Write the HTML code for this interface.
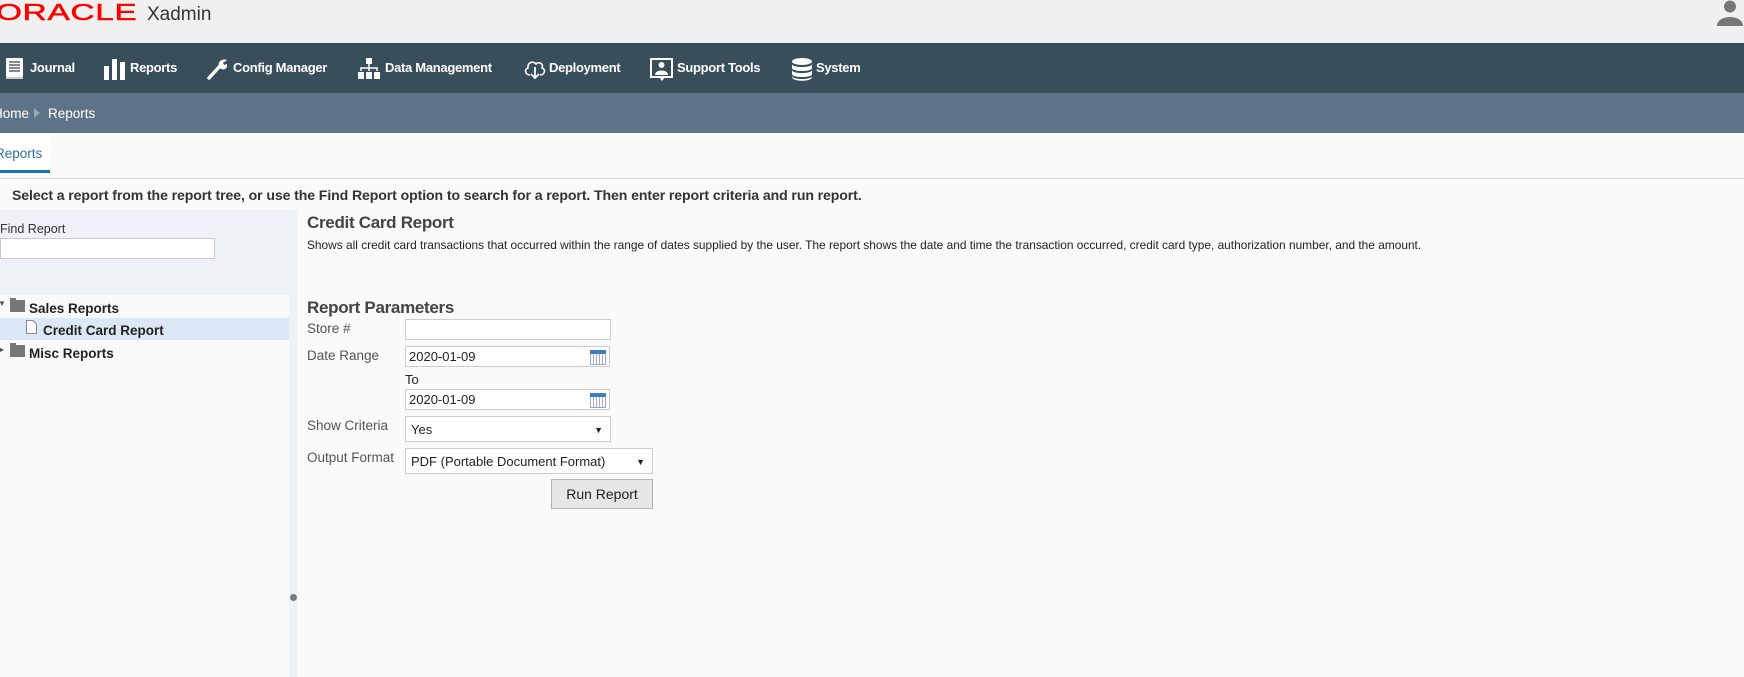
<!DOCTYPE html>
<html><head><meta charset="utf-8"><style>
*{margin:0;padding:0;box-sizing:border-box}
body{width:1744px;height:677px;overflow:hidden;background:#fafafa;font-family:"Liberation Sans",Arial,sans-serif;position:relative;color:#333}
.abs{position:absolute}
#top{left:0;top:0;width:1744px;height:43px;background:#f0f0f0}
#nav{left:0;top:43px;width:1744px;height:50px;background:#384e5b}
#bc{left:0;top:93px;width:1744px;height:40px;background:#5d7387}
.ni{position:absolute;top:0;height:50px;line-height:50px;color:#fff;font-weight:bold;font-size:13px;letter-spacing:-0.3px}
.ni svg{position:absolute;top:15px}
.lbl{position:absolute;font-size:13.5px;color:#555}
.inp{position:absolute;background:#fff;border:1px solid #ccc;font-size:13px;color:#222;padding-left:3px;line-height:20px}
.cal{position:absolute;right:3px;top:3px;width:16px;height:15px;border:1px solid #9ab;background:repeating-linear-gradient(90deg,#fff 0 2px,#aab 2px 3px)}
.cal:before{content:"";position:absolute;left:-1px;right:-1px;top:-1px;height:4px;background:#3a7fc1}
.sel{position:absolute;background:#fff;border:1px solid #ccc;font-size:13px;color:#222;padding-left:5px}
.sel:after{content:"▼";position:absolute;right:7px;font-size:9px;top:0}
</style></head><body>
<div id="top" class="abs">
 <div class="abs" style="left:-4px;top:-1px;font-size:23px;color:#f00;letter-spacing:0.5px;transform:scaleX(1.45);transform-origin:left;-webkit-text-stroke:0.5px #f00">ORACLE</div>
 <div class="abs" style="left:147px;top:4px;font-size:19px;color:#333">Xadmin</div>
 <svg class="abs" style="left:1716px;top:0px" width="28" height="27" viewBox="0 0 28 27"><circle cx="14" cy="6.5" r="6" fill="#777"/><path d="M1 26 C1 14 27 14 27 26Z" fill="#777"/></svg>
</div>
<div id="nav" class="abs">
 <div class="ni" style="left:6px"><svg width="18" height="21" viewBox="0 0 18 21"><rect x="0" y="0" width="17" height="19" rx="1" fill="#fff"/><rect x="0" y="19" width="17" height="2" fill="#ccc"/><g stroke="#384e5b" stroke-width="1.3"><line x1="3" y1="4" x2="14" y2="4"/><line x1="3" y1="7" x2="14" y2="7"/><line x1="3" y1="10" x2="14" y2="10"/><line x1="3" y1="13" x2="14" y2="13"/></g></svg><span style="position:absolute;left:24px;white-space:nowrap">Journal</span></div>
 <div class="ni" style="left:104px"><svg width="22" height="22" viewBox="0 0 22 22"><rect x="0" y="8" width="5" height="14" fill="#fff"/><rect x="8" y="1" width="5" height="21" fill="#fff"/><rect x="16" y="4" width="5" height="18" fill="#fff"/></svg><span style="position:absolute;left:26px;white-space:nowrap">Reports</span></div>
 <div class="ni" style="left:207px"><svg width="22" height="22" viewBox="0 0 22 22"><path d="M2 20 L13 8" stroke="#fff" stroke-width="3.5" stroke-linecap="round"/><path d="M12 9 C10 4 15 0 20 2 L16 5 L17 7 L20 6 C21 11 16 13 13 10Z" fill="#fff"/></svg><span style="position:absolute;left:26px;white-space:nowrap">Config Manager</span></div>
 <div class="ni" style="left:358px"><svg width="22" height="22" viewBox="0 0 22 22"><rect x="8" y="0" width="6" height="6" fill="#fff"/><path d="M11 6V10M3 13V10H19V13M11 10V13" stroke="#fff" stroke-width="1.5" fill="none"/><rect x="0" y="14" width="6" height="7" fill="#fff"/><rect x="8" y="14" width="6" height="7" fill="#fff"/><rect x="16" y="14" width="6" height="7" fill="#fff"/></svg><span style="position:absolute;left:27px;white-space:nowrap">Data Management</span></div>
 <div class="ni" style="left:524px"><svg width="22" height="22" viewBox="0 0 22 22"><path d="M6 17 C1 17 0 11 4 10 C3 5 9 2 12 6 C15 3 20 6 18 10 C22 11 21 17 16 17" stroke="#fff" stroke-width="1.6" fill="none"/><path d="M11 9V20M7 16L11 20L15 16" stroke="#fff" stroke-width="1.8" fill="none"/></svg><span style="position:absolute;left:25px;white-space:nowrap">Deployment</span></div>
 <div class="ni" style="left:650px"><svg width="24" height="24" viewBox="0 0 24 24"><rect x="1" y="1" width="21" height="18" fill="none" stroke="#fff" stroke-width="2"/><path d="M9 19L12 23L15 19" fill="#fff"/><circle cx="11.5" cy="7" r="3" fill="#fff"/><path d="M5 17C5 11 18 11 18 17Z" fill="#fff"/></svg><span style="position:absolute;left:27px;white-space:nowrap">Support Tools</span></div>
 <div class="ni" style="left:792px"><svg width="20" height="23" viewBox="0 0 20 23"><ellipse cx="10" cy="3.5" rx="10" ry="3.5" fill="#fff"/><path d="M0 6C0 10 20 10 20 6V10C20 14 0 14 0 10Z" fill="#fff"/><path d="M0 12C0 16 20 16 20 12V16C20 20 0 20 0 16Z" fill="#fff"/><path d="M0 18C0 22 20 22 20 18V19C20 24 0 24 0 19Z" fill="#fff"/></svg><span style="position:absolute;left:24px;white-space:nowrap">System</span></div>
</div>
<div id="bc" class="abs">
 <div class="abs" style="left:-7px;top:13px;font-size:13.5px;color:#fff">Home</div>
 <div class="abs" style="left:34px;top:15px;width:0;height:0;border-left:6px solid #9aa8b5;border-top:5px solid transparent;border-bottom:5px solid transparent"></div>
 <div class="abs" style="left:48px;top:13px;font-size:13.5px;color:#fff">Reports</div>
</div>
<div class="abs" style="left:0;top:133px;width:50px;height:40px;background:#fff"></div>
<div class="abs" style="left:-5px;top:146px;font-size:13.5px;color:#2f6fa6">Reports</div>
<div class="abs" style="left:0;top:170px;width:50px;height:3px;background:#1a74b8"></div>
<div class="abs" style="left:0;top:178px;width:1744px;height:1px;background:#d8d8d8"></div>
<div class="abs" style="left:12px;top:187px;font-size:14.1px;font-weight:bold;color:#333;white-space:nowrap;letter-spacing:-0.1px">Select a report from the report tree, or use the Find Report option to search for a report. Then enter report criteria and run report.</div>
<div class="abs" style="left:0;top:210px;width:297px;height:467px;background:#eef1f5"></div>
<div class="abs" style="left:0;top:295px;width:289px;height:382px;background:#fafafa"></div>
<div class="abs" style="left:0;top:318px;width:289px;height:22px;background:#dce8f5"></div>
<div class="abs" style="left:290px;top:594px;width:7px;height:7px;border-radius:50%;background:#777"></div>
<div class="abs" style="left:0;top:222px;font-size:12.5px;color:#333">Find Report</div>
<div class="abs" style="left:0;top:238px;width:215px;height:21px;background:#fff;border:1px solid #ccc"></div>
<div class="abs" style="left:-2px;top:299px;font-size:8px;color:#555">▼</div>
<div class="abs" style="left:-2px;top:345px;font-size:8px;color:#555">▶</div>
<svg class="abs" style="left:10px;top:298px" width="15" height="14"><rect x="0" y="0" width="6" height="3" fill="#777"/><rect x="0" y="2" width="15" height="12" fill="#777"/></svg>
<svg class="abs" style="left:10px;top:343px" width="15" height="14"><rect x="0" y="0" width="6" height="3" fill="#777"/><rect x="0" y="2" width="15" height="12" fill="#777"/></svg>
<svg class="abs" style="left:26px;top:320px" width="11" height="14"><path d="M0.5 0.5H7L10.5 4V13.5H0.5Z" fill="#fff" stroke="#888"/></svg>
<div class="abs" style="left:29px;top:301px;font-size:13.5px;font-weight:bold;color:#222">Sales Reports</div>
<div class="abs" style="left:43px;top:323px;font-size:13.5px;font-weight:bold;color:#222">Credit Card Report</div>
<div class="abs" style="left:29px;top:346px;font-size:13.5px;font-weight:bold;color:#222">Misc Reports</div>

<div class="abs" style="left:307px;top:213px;font-size:17px;font-weight:bold;color:#444;letter-spacing:-0.3px">Credit Card Report</div>
<div class="abs" style="left:307px;top:238px;font-size:11.9px;color:#222;white-space:nowrap">Shows all credit card transactions that occurred within the range of dates supplied by the user. The report shows the date and time the transaction occurred, credit card type, authorization number, and the amount.</div>
<div class="abs" style="left:307px;top:298px;font-size:17px;font-weight:bold;color:#444;letter-spacing:-0.3px">Report Parameters</div>
<div class="lbl" style="left:307px;top:321px">Store #</div>
<div class="lbl" style="left:307px;top:348px">Date Range</div>
<div class="lbl" style="left:307px;top:418px">Show Criteria</div>
<div class="lbl" style="left:307px;top:450px">Output Format</div>
<div class="inp" style="left:405px;top:319px;width:206px;height:21px"></div>
<div class="inp" style="left:405px;top:346px;width:205px;height:21px">2020-01-09<div class="cal"></div></div>
<div class="abs" style="left:405px;top:372px;font-size:13px;color:#222">To</div>
<div class="inp" style="left:405px;top:389px;width:205px;height:21px">2020-01-09<div class="cal"></div></div>
<div class="sel" style="left:405px;top:416px;width:206px;height:26px;line-height:26px">Yes</div>
<div class="sel" style="left:405px;top:448px;width:248px;height:26px;line-height:26px">PDF (Portable Document Format)</div>
<div class="abs" style="left:551px;top:479px;width:102px;height:30px;background:#e6e6e6;border:1px solid #b5b5b5;font-size:14px;color:#222;text-align:center;line-height:28px">Run Report</div>
</body></html>
